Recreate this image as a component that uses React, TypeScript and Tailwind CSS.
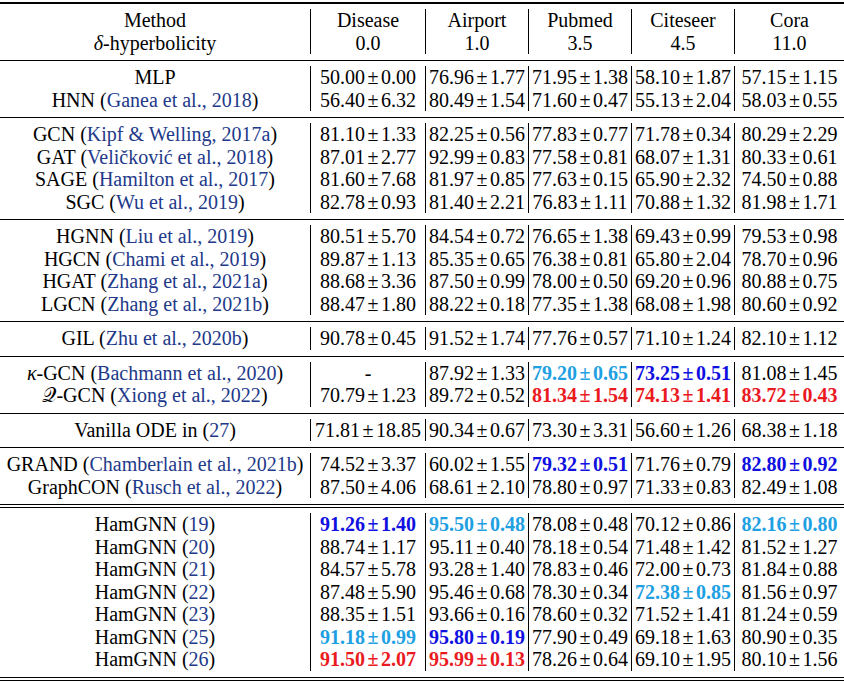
import React from "react";

type Hl = "" | "b" | "c" | "r";
type Cell = [string, Hl];
type Row = { m: React.ReactNode; v: Cell[] };

const C = ({ children }: { children: React.ReactNode }) => (
  <span className="text-[#22398a]">{children}</span>
);

const cite = (pre: React.ReactNode, c: string) => (
  <>
    {pre} (<C>{c}</C>)
  </>
);

const n = (s: string, h: Hl = ""): Cell => [s, h];

const sections: Row[][] = [
  [
    { m: "MLP", v: [n("50.00±0.00"), n("76.96±1.77"), n("71.95±1.38"), n("58.10±1.87"), n("57.15±1.15")] },
    { m: cite("HNN", "Ganea et al., 2018"), v: [n("56.40±6.32"), n("80.49±1.54"), n("71.60±0.47"), n("55.13±2.04"), n("58.03±0.55")] },
  ],
  [
    { m: cite("GCN", "Kipf & Welling, 2017a"), v: [n("81.10±1.33"), n("82.25±0.56"), n("77.83±0.77"), n("71.78±0.34"), n("80.29±2.29")] },
    { m: cite("GAT", "Veličković et al., 2018"), v: [n("87.01±2.77"), n("92.99±0.83"), n("77.58±0.81"), n("68.07±1.31"), n("80.33±0.61")] },
    { m: cite("SAGE", "Hamilton et al., 2017"), v: [n("81.60±7.68"), n("81.97±0.85"), n("77.63±0.15"), n("65.90±2.32"), n("74.50±0.88")] },
    { m: cite("SGC", "Wu et al., 2019"), v: [n("82.78±0.93"), n("81.40±2.21"), n("76.83±1.11"), n("70.88±1.32"), n("81.98±1.71")] },
  ],
  [
    { m: cite("HGNN", "Liu et al., 2019"), v: [n("80.51±5.70"), n("84.54±0.72"), n("76.65±1.38"), n("69.43±0.99"), n("79.53±0.98")] },
    { m: cite("HGCN", "Chami et al., 2019"), v: [n("89.87±1.13"), n("85.35±0.65"), n("76.38±0.81"), n("65.80±2.04"), n("78.70±0.96")] },
    { m: cite("HGAT", "Zhang et al., 2021a"), v: [n("88.68±3.36"), n("87.50±0.99"), n("78.00±0.50"), n("69.20±0.96"), n("80.88±0.75")] },
    { m: cite("LGCN", "Zhang et al., 2021b"), v: [n("88.47±1.80"), n("88.22±0.18"), n("77.35±1.38"), n("68.08±1.98"), n("80.60±0.92")] },
  ],
  [
    { m: cite("GIL", "Zhu et al., 2020b"), v: [n("90.78±0.45"), n("91.52±1.74"), n("77.76±0.57"), n("71.10±1.24"), n("82.10±1.12")] },
  ],
  [
    {
      m: cite(<><i>κ</i>-GCN</>, "Bachmann et al., 2020"),
      v: [n("-"), n("87.92±1.33"), n("79.20±0.65", "c"), n("73.25±0.51", "b"), n("81.08±1.45")],
    },
    {
      m: cite(<>𝒬-GCN</>, "Xiong et al., 2022"),
      v: [n("70.79±1.23"), n("89.72±0.52"), n("81.34±1.54", "r"), n("74.13±1.41", "r"), n("83.72±0.43", "r")],
    },
  ],
  [
    { m: <>Vanilla ODE in (<C>27</C>)</>, v: [n("71.81±18.85"), n("90.34±0.67"), n("73.30±3.31"), n("56.60±1.26"), n("68.38±1.18")] },
  ],
  [
    { m: cite("GRAND", "Chamberlain et al., 2021b"), v: [n("74.52±3.37"), n("60.02±1.55"), n("79.32±0.51", "b"), n("71.76±0.79"), n("82.80±0.92", "b")] },
    { m: cite("GraphCON", "Rusch et al., 2022"), v: [n("87.50±4.06"), n("68.61±2.10"), n("78.80±0.97"), n("71.33±0.83"), n("82.49±1.08")] },
  ],
  [
    { m: cite("HamGNN", "19"), v: [n("91.26±1.40", "b"), n("95.50±0.48", "c"), n("78.08±0.48"), n("70.12±0.86"), n("82.16±0.80", "c")] },
    { m: cite("HamGNN", "20"), v: [n("88.74±1.17"), n("95.11±0.40"), n("78.18±0.54"), n("71.48±1.42"), n("81.52±1.27")] },
    { m: cite("HamGNN", "21"), v: [n("84.57±5.78"), n("93.28±1.40"), n("78.83±0.46"), n("72.00±0.73"), n("81.84±0.88")] },
    { m: cite("HamGNN", "22"), v: [n("87.48±5.90"), n("95.46±0.68"), n("78.30±0.34"), n("72.38±0.85", "c"), n("81.56±0.97")] },
    { m: cite("HamGNN", "23"), v: [n("88.35±1.51"), n("93.66±0.16"), n("78.60±0.32"), n("71.52±1.41"), n("81.24±0.59")] },
    { m: cite("HamGNN", "25"), v: [n("91.18±0.99", "c"), n("95.80±0.19", "b"), n("77.90±0.49"), n("69.18±1.63"), n("80.90±0.35")] },
    { m: cite("HamGNN", "26"), v: [n("91.50±2.07", "r"), n("95.99±0.13", "r"), n("78.26±0.64"), n("69.10±1.95"), n("80.10±1.56")] },
  ],
];

const colW = ["w-[115px]", "w-[103px]", "w-[103px]", "w-[103px]", "w-[110px]"];

const hlClass = (h: Hl) =>
  h === "b"
    ? "font-bold text-[#1010e0]"
    : h === "c"
    ? "font-bold text-[#1ea0e2]"
    : h === "r"
    ? "font-bold text-[#ea1a1f]"
    : "";

const Num = ({ c }: { c: Cell }) => {
  const [s, h] = c;
  const parts = s.split("±");
  return (
    <div className={`h-[22.5px] whitespace-nowrap text-center ${hlClass(h)}`}>
      {parts.length === 2 ? (
        <>
          {parts[0]}
          <span className="mx-[2.5px]">±</span>
          {parts[1]}
        </>
      ) : (
        s
      )}
    </div>
  );
};

const Rule = ({ h = "h-px" }: { h?: string }) => <div className={`${h} w-full bg-black`} />;

const Section = ({ rows }: { rows: Row[] }) => (
  <div className="flex pt-[5px] pb-[6px]">
    <div className="flex w-[310px] flex-col">
      {rows.map((r, i) => (
        <div key={i} className="h-[22.5px] whitespace-nowrap text-center">
          {r.m}
        </div>
      ))}
    </div>
    {colW.map((w, ci) => (
      <div key={ci} className={`flex ${w} flex-col border-l border-black`}>
        {rows.map((r, i) => (
          <Num key={i} c={r.v[ci]} />
        ))}
      </div>
    ))}
  </div>
);

const headers: [string, string][] = [
  ["Disease", "0.0"],
  ["Airport", "1.0"],
  ["Pubmed", "3.5"],
  ["Citeseer", "4.5"],
  ["Cora", "11.0"],
];

export default function App() {
  return (
    <div
      className="w-[844px] h-[683px] overflow-hidden bg-white text-black text-[20px] leading-[22.5px]"
      style={{ fontFamily: '"Liberation Serif", "DejaVu Serif", serif' }}
    >
      <div className="flex flex-col pt-[2px]">
        <Rule h="h-[2px]" />
        <div className="flex pt-[5px] pb-[6px]">
          <div className="flex w-[310px] flex-col text-center">
            <div className="h-[22.5px]">Method</div>
            <div className="h-[22.5px]">
              <i>δ</i>-hyperbolicity
            </div>
          </div>
          {headers.map(([a, b], i) => (
            <div key={i} className={`flex ${colW[i]} flex-col border-l border-black text-center`}>
              <div className="h-[22.5px]">{a}</div>
              <div className="h-[22.5px]">{b}</div>
            </div>
          ))}
        </div>
        <Rule />
        {sections.map((rows, i) => (
          <React.Fragment key={i}>
            <Section rows={rows} />
            {i === 6 ? (
              <>
                <Rule />
                <div className="h-[2px]" />
                <Rule />
              </>
            ) : i === 7 ? (
              <>
                <Rule />
                <div className="h-[2px]" />
                <Rule h="h-[1.5px]" />
              </>
            ) : (
              <Rule />
            )}
          </React.Fragment>
        ))}
      </div>
    </div>
  );
}
